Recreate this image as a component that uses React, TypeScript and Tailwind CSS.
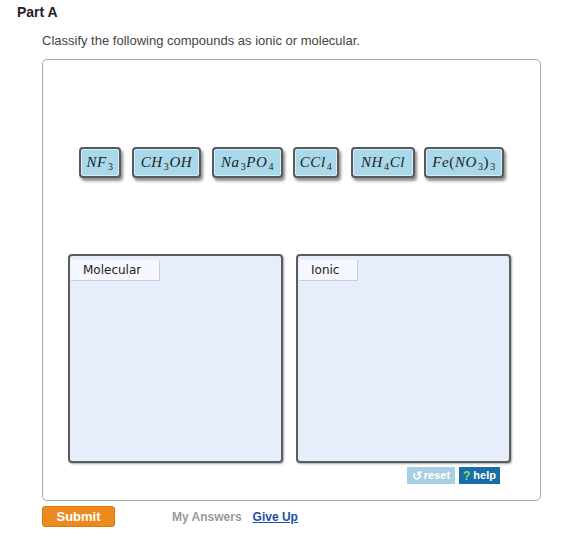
import React from 'react'

type Part = { t: string; sub?: boolean }

const compounds: { key: string; cls: string; parts: Part[] }[] = [
  { key: 'nf3', cls: 'w-[42px]', parts: [{ t: 'NF' }, { t: '3', sub: true }] },
  { key: 'ch3oh', cls: 'w-[69px] ml-[11px]', parts: [{ t: 'CH' }, { t: '3', sub: true }, { t: 'OH' }] },
  { key: 'na3po4', cls: 'w-[71px] ml-[11px]', parts: [{ t: 'Na' }, { t: '3', sub: true }, { t: 'PO' }, { t: '4', sub: true }] },
  { key: 'ccl4', cls: 'w-[46px] ml-[10px]', parts: [{ t: 'CCl' }, { t: '4', sub: true }] },
  { key: 'nh4cl', cls: 'w-[64px] ml-[12px]', parts: [{ t: 'NH' }, { t: '4', sub: true }, { t: 'Cl' }] },
  { key: 'feno33', cls: 'w-[80px] ml-[9px]', parts: [{ t: 'Fe' }, { t: '(' }, { t: 'NO' }, { t: '3', sub: true }, { t: ')' }, { t: '3', sub: true }] },
]

function Tile({ cls, parts }: { cls: string; parts: Part[] }) {
  return (
    <div
      className={`${cls} h-[31px] rounded-[4px] border-2 border-[#5a5a5a] bg-[#a9d9ea] shadow-[2px_3px_3px_rgba(0,0,0,0.45)] flex items-center justify-center ring-1 ring-inset ring-[#d8eef6]`}
    >
      <span className="font-['Liberation_Serif',serif] italic text-[15px] tracking-[0.6px] text-[#222] leading-none">
        {parts.map((p, i) =>
          p.sub ? (
            <span key={i} className="not-italic text-[10px] relative top-[3px] ml-[1px]">
              {p.t}
            </span>
          ) : (
            <span key={i} className={p.t === '(' || p.t === ')' ? 'not-italic' : ''}>
              {p.t}
            </span>
          )
        )}
      </span>
    </div>
  )
}

function DropBox({ label }: { label: string }) {
  return (
    <div className="w-[215px] h-[209px] rounded-[4px] border-2 border-[#5c5c5c] bg-[#e6edfb] shadow-[1px_1px_2px_rgba(0,0,0,0.35)] p-[1px]">
      <div className="inline-block h-[21px] pl-[12px] pr-[18px] bg-[#f5f8fe] border-r border-b border-[#c9ced8] font-['DejaVu_Sans',sans-serif] text-[12px] leading-[21px] text-[#222]">
        {label}
      </div>
    </div>
  )
}

export default function App() {
  return (
    <div className="w-[570px] h-[545px] bg-white font-['Liberation_Sans',Arial,sans-serif]">
      <div className="pt-[4px] pl-[17px] text-[14px] font-bold text-[#222] leading-[17px]">Part A</div>
      <div className="pl-[42px] pt-[12px] text-[13px] text-[#444] leading-[15px]">
        Classify the following compounds as ionic or molecular.
      </div>

      <div className="ml-[42px] mt-[11px] w-[499px] h-[442px] rounded-[5px] border border-[#a8a8a8] flex flex-col">
        <div className="flex items-start pl-[36px] pt-[87px]">
          {compounds.map((c) => (
            <Tile key={c.key} cls={c.cls} parts={c.parts} />
          ))}
        </div>

        <div className="flex gap-[13px] pl-[25px] pt-[76px]">
          <DropBox label="Molecular" />
          <DropBox label="Ionic" />
        </div>

        <div className="flex justify-end gap-[4px] pr-[40px] pt-[4px]">
          <div className="h-[17px] w-[48px] bg-[#a9cfe4] flex items-center justify-center gap-[2px] text-white text-[11px] font-bold">
            <span className="text-[12px] leading-none">↺</span>
            <span>reset</span>
          </div>
          <div className="h-[17px] w-[41px] bg-[#1a6ea8] flex items-center justify-center gap-[3px] text-white text-[11px] font-bold">
            <span className="text-[#7ee36a] text-[12px]">?</span>
            <span>help</span>
          </div>
        </div>
      </div>

      <div className="flex items-center mt-[5px] pl-[42px]">
        <div className="w-[73px] h-[21px] rounded-[3px] bg-[#ec8a1e] border border-[#d87a12] text-white text-[13px] font-bold flex items-center justify-center">
          Submit
        </div>
        <span className="ml-[57px] text-[12px] font-bold text-[#999]">My Answers</span>
        <span className="ml-[11px] text-[12px] font-bold text-[#1a4fa8] underline">Give Up</span>
      </div>
    </div>
  )
}
